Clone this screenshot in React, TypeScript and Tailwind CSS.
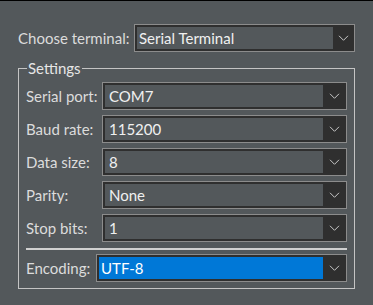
import { ReactNode } from "react";

function Chevron() {
  return (
    <svg width="11" height="6" viewBox="0 0 11 6" fill="none">
      <path d="M1 0.8l4.5 4.5 4.5-4.5" stroke="#c8c8c8" strokeWidth="1" />
    </svg>
  );
}

interface ComboProps {
  value: string;
  selected?: boolean;
  className?: string;
  arrowW?: string;
  textPad?: string;
}

function Combo({ value, selected, className, arrowW = "w-[23px]", textPad = "pl-[4px]" }: ComboProps) {
  return (
    <div
      className={`flex h-[28px] border border-[#8c8c8c] bg-[#2f2f2f] p-[2px] pr-0 ${className ?? ""}`}
    >
      <div
        className={`flex flex-1 items-center ${textPad} ${
          selected ? "bg-[#0078d7] text-white" : "bg-[#53585b] text-[#f0f0f0]"
        }`}
      >
        {value}
      </div>
      <div className={`flex ${arrowW} items-center justify-center`}>
        <Chevron />
      </div>
    </div>
  );
}

function Row({ label, children }: { label: string; children: ReactNode }) {
  return (
    <div className="flex items-center">
      <span className="w-[76px] shrink-0 text-[#dcdcdc]">{label}</span>
      {children}
    </div>
  );
}

export default function App() {
  return (
    <div
      className="h-[305px] w-[373px] whitespace-nowrap border-t border-black bg-[#53585b] text-[15px] leading-[20px]"
      style={{ fontFamily: 'Lato, "Noto Sans", sans-serif' }}
    >
      <div className="flex items-center pl-[18px] pt-[23px]">
        <span className="w-[116px] shrink-0 text-[#dcdcdc]">Choose terminal:</span>
        <Combo
          value="Serial Terminal"
          className="w-[221px]"
          arrowW="w-[21px]"
          textPad="pl-[2px]"
        />
      </div>

      <fieldset className="ml-[18px] mt-[6px] w-[337px] border border-[#c4c4c4] px-[7px] pb-[6px] pt-[4px]">
        <legend className="ml-[1px] px-[1px] text-[#e6e6e6]">Settings</legend>
        <div className="flex flex-col gap-[5px]">
          <Row label="Serial port:">
            <Combo value="COM7" className="flex-1" />
          </Row>
          <Row label="Baud rate:">
            <Combo value="115200" className="flex-1" />
          </Row>
          <Row label="Data size:">
            <Combo value="8" className="flex-1" />
          </Row>
          <Row label="Parity:">
            <Combo value="None" className="flex-1" />
          </Row>
          <Row label="Stop bits:">
            <Combo value="1" className="flex-1" />
          </Row>
        </div>
        <div className="mt-[6px] h-[2px] bg-[#d0d0d0]" />
        <div className="mt-[4px] flex items-center">
          <span className="w-[70px] shrink-0 text-[#dcdcdc]">Encoding:</span>
          <Combo value="UTF-8" selected className="flex-1" textPad="pl-[2px]" />
        </div>
      </fieldset>
    </div>
  );
}
